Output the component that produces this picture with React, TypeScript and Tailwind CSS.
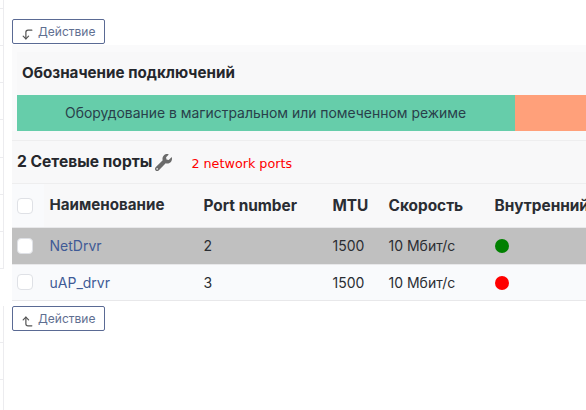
import React from 'react'
import { CornerLeftDown, CornerLeftUp } from 'lucide-react'
import { FaWrench } from 'react-icons/fa'

const ports = [
  { name: 'NetDrvr', number: '2', mtu: '1500', speed: '10 Мбит/с', color: 'bg-[#008000]', row: 'h-[37px] pb-[1px] bg-[#c0c0c0]' },
  { name: 'uAP_drvr', number: '3', mtu: '1500', speed: '10 Мбит/с', color: 'mt-[1px] bg-[#ff0000]', row: 'h-[36px] pb-[1px] bg-[#f9fafc]' }
]

// rows of the table that is cut off at the left edge of the page
const strip = [
  { h: 'h-[9px]', right: true },
  { h: 'h-[37px]', right: true },
  { h: 'h-[37px]', right: true },
  { h: 'h-[37px]', right: true },
  { h: 'h-[38px]', right: true },
  { h: 'h-[37px]', right: true },
  { h: 'h-[37px]', right: true },
  { h: 'h-[37px]', right: true },
  { h: 'h-[37px]', right: false },
  { h: 'h-[37px]', right: true },
  { h: 'h-[37px]', right: true },
  { h: 'h-[32px]', right: true }
]

function ActionButton({ up }: { up?: boolean }) {
  const Icon = up ? CornerLeftUp : CornerLeftDown
  return (
    <button className="flex h-[25px] w-[93px] items-center rounded-[2px] border border-[#5a6a94] bg-white pl-[8px] text-[12px] text-[#5f6f91]">
      <Icon strokeWidth={2.25} className="mr-[4px] mt-[5px] h-[13px] w-[13px] text-[#555]" />
      <span>Действие</span>
    </button>
  )
}

function Checkbox() {
  return <div className="h-[16px] w-[16px] rounded-[4px] border border-[#dfe1e6] bg-white" />
}

export default function App() {
  return (
    <div className="flex h-[410px] w-[586px] overflow-hidden bg-white font-['Inter',sans-serif] text-[#2a2d33]">
      <div className="w-[4px] shrink-0">
        {strip.map((cell, i) => (
          <div
            key={i}
            className={`${cell.h} ${cell.right ? 'border-r' : ''} ${i === strip.length - 1 || !cell.right ? '' : 'border-b'} border-[#ececef]`}
          />
        ))}
      </div>
      <div className="min-w-0 flex-1 pl-[8px] pt-[19px]">
        <ActionButton />
        <div className="mt-[1px] w-[574px] bg-[#f8f8f9]">
          <div className="bg-[#fafafb] pl-[5px] pt-[7px]">
            <div className="flex h-[43px] items-center bg-[#f8f8f9] pl-[5px] text-[15.2px] font-bold text-[#25272c]">
              Обозначение подключений
            </div>
            <div className="flex h-[36px] items-center">
              <div className="flex h-full w-[498px] items-center bg-[#66cdaa] pl-[48px] text-[13.93px] text-[#29404a]">
                Оборудование в магистральном или помеченном режиме
              </div>
              <div className="h-full flex-1 bg-[#ffa07a]" />
            </div>
          </div>
          <div className="mt-[9px] flex h-[44px] items-center border-y border-[#eeeeef] pl-[5px]">
            <span className="text-[15.6px] font-bold text-[#25272c]">2 Сетевые порты</span>
            <FaWrench className="ml-[3px] h-[17px] w-[17px] text-[#6b6b6b]" />
            <span className="ml-[19px] mt-[4px] font-['DejaVu_Sans',sans-serif] text-[12.75px] text-[#ff0000]">2 network ports</span>
          </div>
          <div className="flex h-[44px] items-center overflow-hidden border-b border-[#e8e8ea] text-[15.4px] font-bold text-[#2a2d33]">
            <div className="flex h-full w-[32px] shrink-0 items-center bg-[#f9fafc] pl-[5px]"><Checkbox /></div>
            <div className="ml-[5.5px] w-[154px] shrink-0 whitespace-nowrap text-[15.15px]">Наименование</div>
            <div className="w-[129px] shrink-0 whitespace-nowrap">Port number</div>
            <div className="w-[56px] shrink-0">MTU</div>
            <div className="w-[106px] shrink-0">Скорость</div>
            <div className="shrink-0 whitespace-nowrap">Внутренний</div>
          </div>
          {ports.map((port) => (
            <div key={port.name} className={`flex items-center border-b border-[#e8e8ea] text-[14px] ${port.row}`}>
              <div className="flex w-[32px] shrink-0 pl-[5px]"><Checkbox /></div>
              <div className="ml-[5.5px] w-[154px] shrink-0 text-[#3f5a96]">{port.name}</div>
              <div className="w-[129px] shrink-0">{port.number}</div>
              <div className="w-[56px] shrink-0">{port.mtu}</div>
              <div className="w-[106px] shrink-0">{port.speed}</div>
              <div className={`h-[14px] w-[14px] shrink-0 rounded-full ${port.color}`} />
            </div>
          ))}
        </div>
        <div className="mt-[5px]">
          <ActionButton up />
        </div>
      </div>
    </div>
  )
}
